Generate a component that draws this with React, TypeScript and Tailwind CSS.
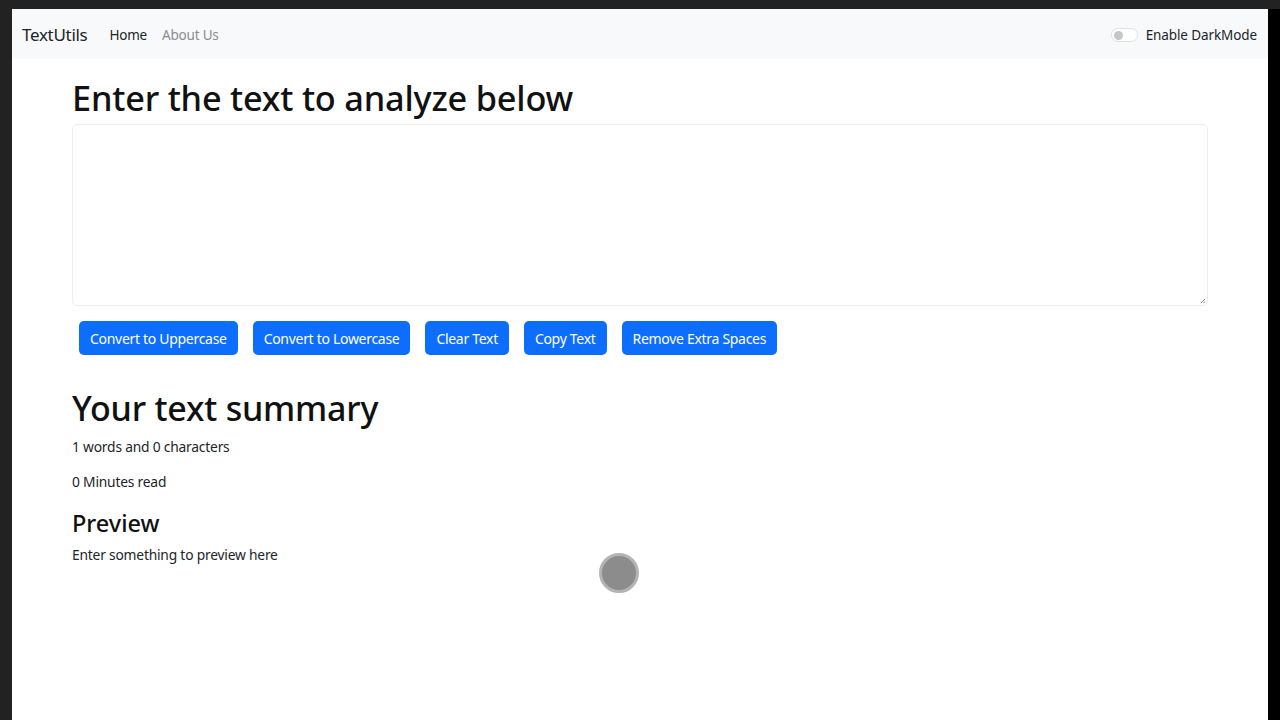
import React from "react";

export default function App() {
  const font = { fontFamily: '"Noto Sans", "Open Sans", sans-serif' };
  const buttons = [
    "Convert to Uppercase",
    "Convert to Lowercase",
    "Clear Text",
    "Copy Text",
    "Remove Extra Spaces",
  ];
  return (
    <div className="relative flex flex-col h-[720px] w-[1280px] bg-[#222222] overflow-hidden" style={font}>
      <div className="h-[9px] shrink-0" />
      <div className="flex flex-1">
        <div className="w-[12px] shrink-0 bg-[#222222]" />
        <div className="flex-1 flex flex-col bg-white">
          <nav className="h-[50px] bg-[#f8f9fa] flex items-center pl-[10px] pr-[11px] pt-[2px]">
            <span className="text-[17px] text-[#212529] tracking-[-0.3px]">TextUtils</span>
            <span className="ml-[22px] text-[13.5px] text-[#212529] tracking-[-0.2px]">Home</span>
            <span className="ml-[15px] text-[13.5px] text-[#8a8d90] tracking-[-0.2px]">About Us</span>
            <div className="ml-auto flex items-center">
              <div className="w-[27px] h-[14px] rounded-full border border-[#dee2e6] bg-white flex items-center pl-[2px]">
                <div className="w-[9px] h-[9px] rounded-full bg-[#c4c6c8]" />
              </div>
              <span className="ml-[8px] text-[13.5px] text-[#212529] tracking-[-0.1px]">Enable DarkMode</span>
            </div>
          </nav>
          <div className="pl-[60px] pr-[60px] flex flex-col">
            <h1 className="mt-[15px] text-[34.3px] leading-[48px] font-medium text-[#111] tracking-[-0.2px]">
              Enter the text to analyze below
            </h1>
            <div className="relative mt-[2px] h-[182px] rounded-[5px] border border-[#eceef0]">
              <svg className="absolute right-[1px] bottom-[1px]" width="6" height="6" viewBox="0 0 6 6">
                <path d="M5 1 L1 5 M5 3.5 L3.5 5" stroke="#888" strokeWidth="1" />
              </svg>
            </div>
            <div className="flex mt-[15px] ml-[7px] gap-[15px]">
              {buttons.map((b) => (
                <div
                  key={b}
                  className="h-[34px] px-[11px] flex items-center rounded-[5px] bg-[#0d6efd] text-white text-[14px] tracking-[-0.3px]"
                >
                  {b}
                </div>
              ))}
            </div>
            <h2 className="mt-[33px] text-[34px] leading-[40px] font-medium text-[#111] tracking-[-0.2px]">
              Your text summary
            </h2>
            <p className="mt-[9px] text-[13.8px] leading-[20px] text-[#212529] tracking-[-0.2px]">1 words and 0 characters</p>
            <p className="mt-[15px] text-[13.8px] leading-[20px] text-[#212529] tracking-[-0.2px]">0 Minutes read</p>
            <h3 className="mt-[16px] text-[23.5px] leading-[30px] font-medium text-[#111]">Preview</h3>
            <p className="mt-[7px] text-[13.8px] leading-[20px] text-[#212529] tracking-[-0.2px]">
              Enter something to preview here
            </p>
          </div>
        </div>
        <div className="w-[12px] shrink-0 bg-black" />
      </div>
      <div className="absolute left-[599px] top-[553px] w-[40px] h-[40px] rounded-full bg-[#8c8c8c] border-[3px] border-[#b4b4b4]" />
    </div>
  );
}
